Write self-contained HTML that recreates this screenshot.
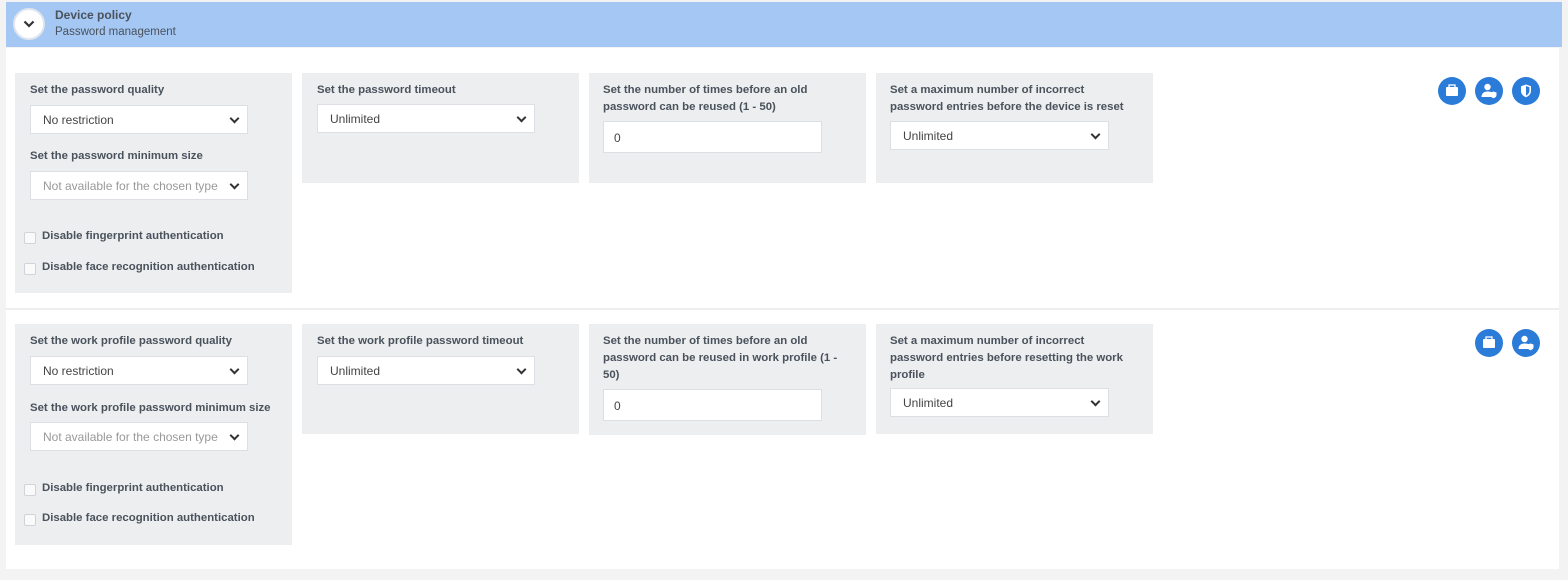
<!DOCTYPE html>
<html><head><style>
*{box-sizing:border-box;margin:0;padding:0}
body{width:1568px;height:580px;background:#f3f3f3;font-family:"Liberation Sans",sans-serif;position:relative;overflow:hidden}
.a{position:absolute}
.hdr{left:6px;top:2px;width:1556px;height:45px;background:#a4c7f3}
.tog{left:13px;top:8px;width:32px;height:32px;border-radius:50%;background:#fff;border:2px solid #dfe6ee}
.card{left:6px;top:48px;width:1553px;height:521px;background:#fff}
.div{left:6px;top:308px;width:1553px;height:2px;background:#eceef0}
.p{position:absolute;background:#eceef0}
.l{position:absolute;font-size:11.4px;font-weight:bold;color:#4a525c;line-height:17px;white-space:nowrap}
.s{position:absolute;background:#fff;border:1px solid #dcdfe3;height:29px;font-size:12px;color:#444;padding:7px 0 0 12px}
.s.dis{color:#999}
.s:after{content:"";position:absolute;right:9px;top:9px;width:5px;height:5px;border-right:2px solid #333;border-bottom:2px solid #333;transform:rotate(45deg)}
.i{position:absolute;background:#fff;border:1px solid #dcdfe3;height:32px;font-size:12px;color:#444;padding:9px 0 0 10px}
.cb{position:absolute;width:12px;height:12px;border:1px solid #d0d3d7;border-radius:2px;background:#fafafa}
.ic{position:absolute;width:28px;height:28px;border-radius:50%;background:#2b7bd9}
</style></head><body>
<div class="a hdr"></div>
<div class="a tog"><svg width="28" height="28" viewBox="0 0 28 28" style="position:absolute;left:0;top:0"><path d="M9.5 11.5l4.5 4.5 4.5-4.5" stroke="#333" stroke-width="2.2" fill="none"/></svg></div>
<div class="a" style="left:55px;top:8px;font-size:12px;font-weight:bold;color:#4a525c">Device policy</div>
<div class="a" style="left:55px;top:26px;font-size:11.5px;color:#4a525c">Password management</div>
<div class="a card"></div>
<div class="a div"></div>

<div class="p" style="left:15px;top:73px;width:277px;height:220px"></div>
<div class="l" style="left:30px;top:82px">Set the password quality</div>
<div class="s" style="left:30px;top:105px;width:218px">No restriction</div>
<div class="l" style="left:30px;top:148px">Set the password minimum size</div>
<div class="s dis" style="left:30px;top:171px;width:218px">Not available for the chosen type</div>
<div class="cb" style="left:24px;top:232px"></div>
<div class="l" style="left:42px;top:228px">Disable fingerprint authentication</div>
<div class="cb" style="left:24px;top:263px"></div>
<div class="l" style="left:42px;top:259px">Disable face recognition authentication</div>

<div class="p" style="left:302px;top:73px;width:277px;height:110px"></div>
<div class="l" style="left:317px;top:82px">Set the password timeout</div>
<div class="s" style="left:317px;top:104px;width:218px">Unlimited</div>

<div class="p" style="left:589px;top:73px;width:277px;height:110px"></div>
<div class="l" style="left:603px;top:82px">Set the number of times before an old<br>password can be reused (1 - 50)</div>
<div class="i" style="left:603px;top:121px;width:219px">0</div>

<div class="p" style="left:876px;top:73px;width:277px;height:110px"></div>
<div class="l" style="left:890px;top:82px">Set a maximum number of incorrect<br>password entries before the device is reset</div>
<div class="s" style="left:890px;top:121px;width:219px">Unlimited</div>

<div class="p" style="left:15px;top:324px;width:277px;height:221px"></div>
<div class="l" style="left:30px;top:333px">Set the work profile password quality</div>
<div class="s" style="left:30px;top:356px;width:218px">No restriction</div>
<div class="l" style="left:30px;top:400px">Set the work profile password minimum size</div>
<div class="s dis" style="left:30px;top:422px;width:218px">Not available for the chosen type</div>
<div class="cb" style="left:24px;top:484px"></div>
<div class="l" style="left:42px;top:480px">Disable fingerprint authentication</div>
<div class="cb" style="left:24px;top:514px"></div>
<div class="l" style="left:42px;top:510px">Disable face recognition authentication</div>

<div class="p" style="left:302px;top:324px;width:277px;height:110px"></div>
<div class="l" style="left:317px;top:333px">Set the work profile password timeout</div>
<div class="s" style="left:317px;top:356px;width:218px">Unlimited</div>

<div class="p" style="left:589px;top:324px;width:277px;height:111px"></div>
<div class="l" style="left:603px;top:333px">Set the number of times before an old<br>password can be reused in work profile (1 -<br>50)</div>
<div class="i" style="left:603px;top:389px;width:219px">0</div>

<div class="p" style="left:876px;top:324px;width:277px;height:110px"></div>
<div class="l" style="left:890px;top:333px">Set a maximum number of incorrect<br>password entries before resetting the work<br>profile</div>
<div class="s" style="left:890px;top:388px;width:219px">Unlimited</div>

<svg width="0" height="0" style="position:absolute"><defs>
<g id="bag"><rect x="8" y="10" width="12" height="9" rx="1" fill="#fff"/><rect x="11" y="8" width="6" height="3" fill="none" stroke="#fff" stroke-width="1.3"/></g>
<g id="usr"><circle cx="12.5" cy="10" r="3.2" fill="#fff"/><path d="M6.5 20c0-4 3-5.5 6-5.5s4 .6 4.5 1.2V20z" fill="#fff"/><path d="M18.5 14.5l3 1v2.5c0 1.6-1.3 2.7-3 3.2-1.7-.5-3-1.6-3-3.2v-2.5z" fill="#fff"/></g>
<g id="sh"><path d="M14 7.5l5 1.8v4.5c0 3.2-2.2 5.4-5 6.4-2.8-1-5-3.2-5-6.4V9.3z" fill="#fff"/><path d="M14 9v9.5c1.8-.8 3.4-2.4 3.4-4.7v-3.5z" fill="#2b7bd9"/></g>
</defs></svg>
<svg class="ic" style="left:1438px;top:77px" viewBox="0 0 28 28"><use href="#bag"/></svg>
<svg class="ic" style="left:1475px;top:77px" viewBox="0 0 28 28"><use href="#usr"/></svg>
<svg class="ic" style="left:1512px;top:77px" viewBox="0 0 28 28"><use href="#sh"/></svg>
<svg class="ic" style="left:1475px;top:329px" viewBox="0 0 28 28"><use href="#bag"/></svg>
<svg class="ic" style="left:1512px;top:329px" viewBox="0 0 28 28"><use href="#usr"/></svg>
</body></html>
